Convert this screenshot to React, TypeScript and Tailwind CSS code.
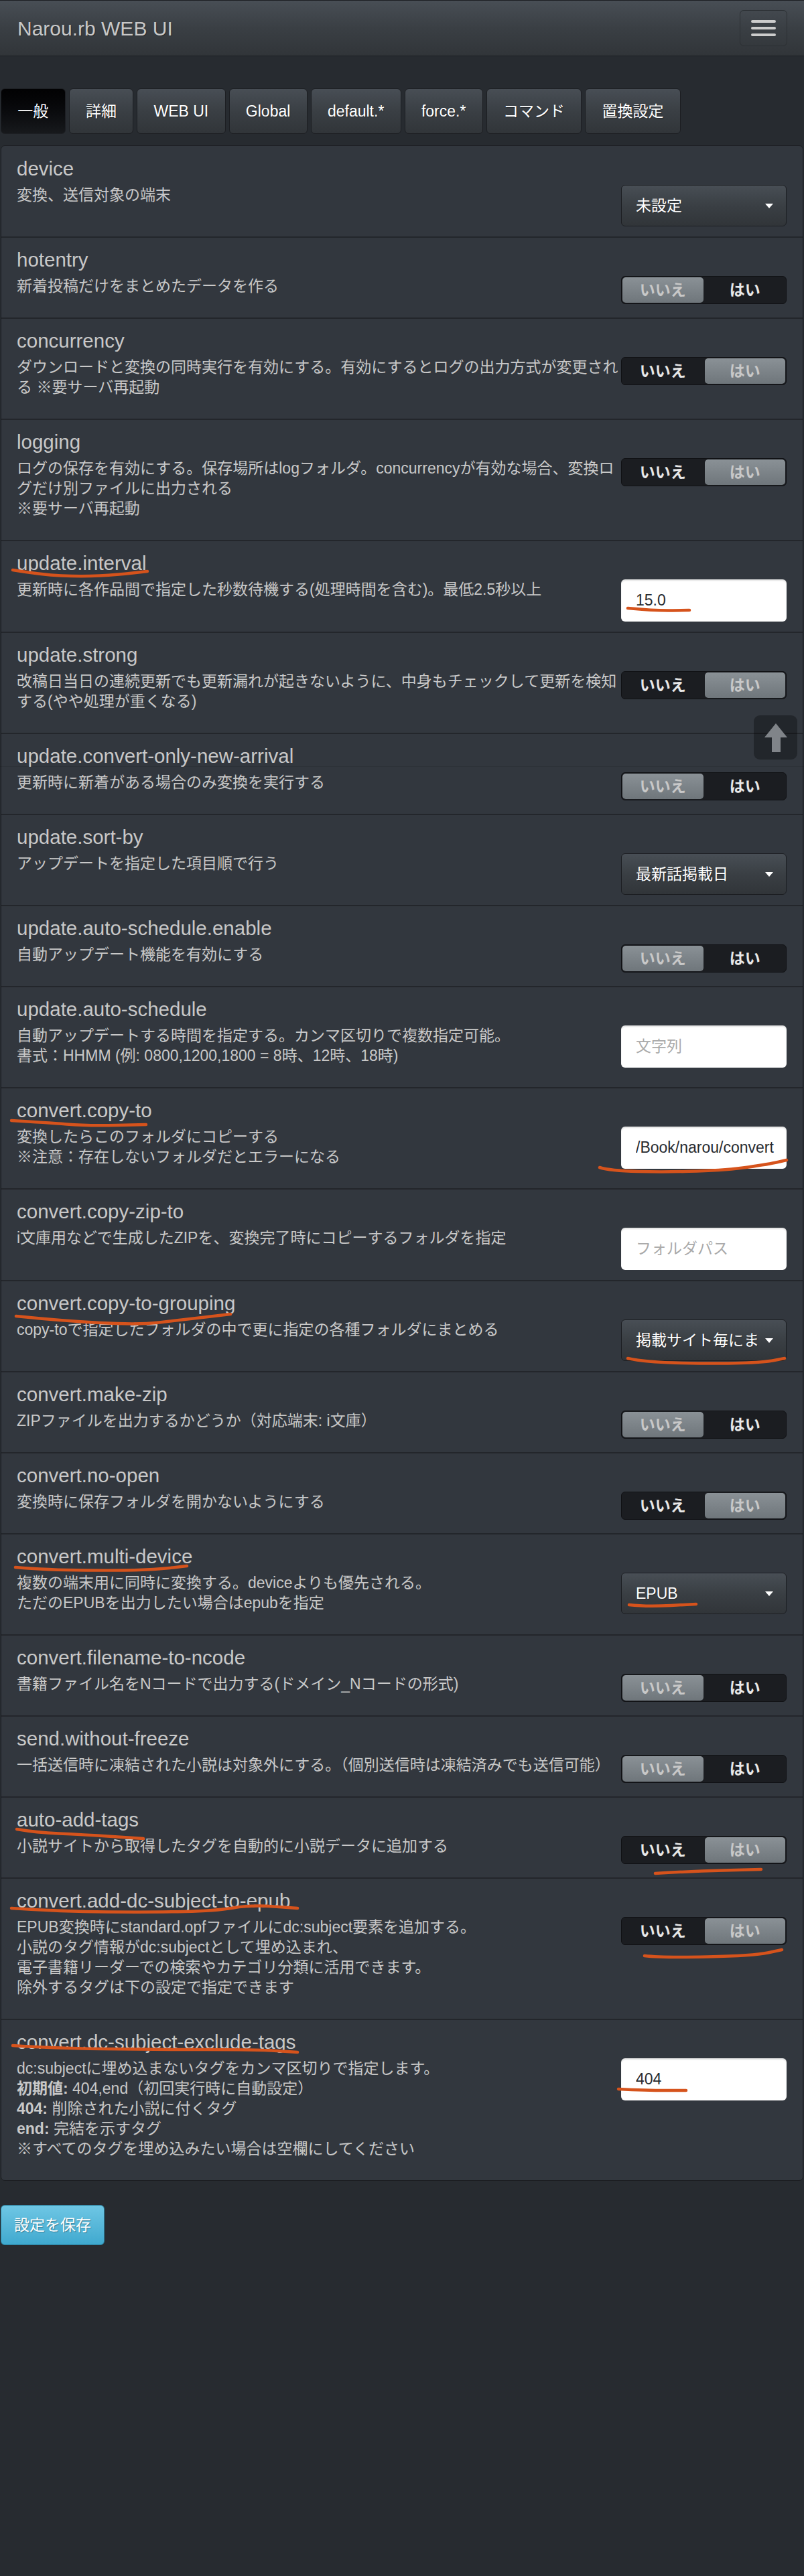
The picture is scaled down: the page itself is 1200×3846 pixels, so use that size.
import type { ReactNode } from "react";

type Control =
  | { kind: "switch"; on: boolean }
  | { kind: "select"; value: string }
  | { kind: "input"; value?: string; placeholder?: string };

interface Setting {
  name: string;
  desc: ReactNode[];
  control: Control;
}

const FONT = "font-['Liberation_Sans','Noto_Sans_CJK_JP',sans-serif]";

const tabs = ["一般", "詳細", "WEB UI", "Global", "default.*", "force.*", "コマンド", "置換設定"];

const settings: Setting[] = [
  { name: "device", desc: ["変換、送信対象の端末"], control: { kind: "select", value: "未設定" } },
  { name: "hotentry", desc: ["新着投稿だけをまとめたデータを作る"], control: { kind: "switch", on: false } },
  {
    name: "concurrency",
    desc: ["ダウンロードと変換の同時実行を有効にする。有効にするとログの出力方式が変更される ※要サーバ再起動"],
    control: { kind: "switch", on: true },
  },
  {
    name: "logging",
    desc: ["ログの保存を有効にする。保存場所はlogフォルダ。concurrencyが有効な場合、変換ログだけ別ファイルに出力される", "※要サーバ再起動"],
    control: { kind: "switch", on: true },
  },
  {
    name: "update.interval",
    desc: ["更新時に各作品間で指定した秒数待機する(処理時間を含む)。最低2.5秒以上"],
    control: { kind: "input", value: "15.0" },
  },
  {
    name: "update.strong",
    desc: ["改稿日当日の連続更新でも更新漏れが起きないように、中身もチェックして更新を検知する(やや処理が重くなる)"],
    control: { kind: "switch", on: true },
  },
  { name: "update.convert-only-new-arrival", desc: ["更新時に新着がある場合のみ変換を実行する"], control: { kind: "switch", on: false } },
  { name: "update.sort-by", desc: ["アップデートを指定した項目順で行う"], control: { kind: "select", value: "最新話掲載日" } },
  { name: "update.auto-schedule.enable", desc: ["自動アップデート機能を有効にする"], control: { kind: "switch", on: false } },
  {
    name: "update.auto-schedule",
    desc: ["自動アップデートする時間を指定する。カンマ区切りで複数指定可能。", "書式：HHMM (例: 0800,1200,1800 = 8時、12時、18時)"],
    control: { kind: "input", placeholder: "文字列" },
  },
  {
    name: "convert.copy-to",
    desc: ["変換したらこのフォルダにコピーする", "※注意：存在しないフォルダだとエラーになる"],
    control: { kind: "input", value: "/Book/narou/convert" },
  },
  {
    name: "convert.copy-zip-to",
    desc: ["i文庫用などで生成したZIPを、変換完了時にコピーするフォルダを指定"],
    control: { kind: "input", placeholder: "フォルダパス" },
  },
  {
    name: "convert.copy-to-grouping",
    desc: ["copy-toで指定したフォルダの中で更に指定の各種フォルダにまとめる"],
    control: { kind: "select", value: "掲載サイト毎にまとめる" },
  },
  { name: "convert.make-zip", desc: ["ZIPファイルを出力するかどうか（対応端末: i文庫）"], control: { kind: "switch", on: false } },
  { name: "convert.no-open", desc: ["変換時に保存フォルダを開かないようにする"], control: { kind: "switch", on: true } },
  {
    name: "convert.multi-device",
    desc: ["複数の端末用に同時に変換する。deviceよりも優先される。", "ただのEPUBを出力したい場合はepubを指定"],
    control: { kind: "select", value: "EPUB" },
  },
  { name: "convert.filename-to-ncode", desc: ["書籍ファイル名をNコードで出力する(ドメイン_Nコードの形式)"], control: { kind: "switch", on: false } },
  { name: "send.without-freeze", desc: ["一括送信時に凍結された小説は対象外にする。（個別送信時は凍結済みでも送信可能）"], control: { kind: "switch", on: false } },
  { name: "auto-add-tags", desc: ["小説サイトから取得したタグを自動的に小説データに追加する"], control: { kind: "switch", on: true } },
  {
    name: "convert.add-dc-subject-to-epub",
    desc: [
      "EPUB変換時にstandard.opfファイルにdc:subject要素を追加する。",
      "小説のタグ情報がdc:subjectとして埋め込まれ、",
      "電子書籍リーダーでの検索やカテゴリ分類に活用できます。",
      "除外するタグは下の設定で指定できます",
    ],
    control: { kind: "switch", on: true },
  },
  {
    name: "convert.dc-subject-exclude-tags",
    desc: [
      "dc:subjectに埋め込まないタグをカンマ区切りで指定します。",
      <><b>初期値:</b> 404,end（初回実行時に自動設定）</>,
      <><b>404:</b> 削除された小説に付くタグ</>,
      <><b>end:</b> 完結を示すタグ</>,
      "※すべてのタグを埋め込みたい場合は空欄にしてください",
    ],
    control: { kind: "input", value: "404" },
  },
];

// hand-drawn marks on the screenshot, in page coordinates
const marks: [number, number][][] = [
  [[19, 851], [61, 858], [122, 861], [176, 858], [220, 853]],
  [[937, 908], [979, 912], [1029, 911]],
  [[17, 1673], [69, 1676], [130, 1681], [218, 1679]],
  [[895, 1743], [910, 1748], [995, 1750], [1086, 1747], [1148, 1738], [1174, 1732]],
  [[24, 1965], [92, 1972], [207, 1978], [268, 1971], [344, 1962]],
  [[937, 2028], [964, 2034], [1071, 2036], [1140, 2034], [1171, 2028]],
  [[23, 2340], [69, 2344], [191, 2345], [245, 2342], [279, 2338]],
  [[939, 2396], [964, 2399], [1039, 2395]],
  [[25, 2731], [54, 2736], [122, 2739], [214, 2745]],
  [[978, 2797], [1025, 2794], [1136, 2791]],
  [[17, 2849], [92, 2854], [230, 2855], [321, 2853], [375, 2844], [444, 2849]],
  [[962, 2920], [987, 2923], [1125, 2920], [1167, 2911]],
  [[19, 3054], [76, 3058], [230, 3060], [383, 3060], [444, 3064]],
  [[923, 3119], [964, 3121], [1024, 3121]],
];

function markPath(points: [number, number][]) {
  let d = `M${points[0][0]} ${points[0][1]}`;
  for (let i = 1; i < points.length - 1; i++) {
    const mx = (points[i][0] + points[i + 1][0]) / 2;
    const my = (points[i][1] + points[i + 1][1]) / 2;
    d += ` Q${points[i][0]} ${points[i][1]} ${mx} ${my}`;
  }
  const last = points[points.length - 1];
  return `${d} L${last[0]} ${last[1]}`;
}

function Switch({ on }: { on: boolean }) {
  const active = "bg-gradient-to-b from-[#8a9196] to-[#6f767b] text-[#c8c8c8] rounded-[5px]";
  const idle = "text-[#e8e8e8]";
  return (
    <div className="flex h-[42px] w-[247px] gap-[2px] rounded-[6px] border border-[#101114] bg-[#1b1d21] p-px text-[23px] font-bold leading-[38px] text-center">
      <div className={`flex-1 ${on ? idle : active}`}>いいえ</div>
      <div className={`flex-1 ${on ? active : idle}`}>はい</div>
    </div>
  );
}

function SelectBox({ value }: { value: string }) {
  return (
    <div className="flex h-[62px] w-[247px] items-center gap-2 rounded-[6px] border border-[#1c1e22] bg-gradient-to-b from-[#484e55] via-[#3a3f44] to-[#313539] pl-[21px] pr-[19px] text-[23px] text-white">
      <span className="flex-1 overflow-hidden whitespace-nowrap [text-shadow:1px_1px_1px_rgba(0,0,0,0.3)]">{value}</span>
      <span className="h-0 w-0 border-x-[6px] border-t-[7px] border-x-transparent border-t-white" />
    </div>
  );
}

function TextBox({ value, placeholder }: { value?: string; placeholder?: string }) {
  return (
    <input
      readOnly
      value={value ?? ""}
      placeholder={placeholder}
      className={`block h-[63px] w-[247px] rounded-[6px] bg-white pl-[22px] pr-[16px] text-[23px] text-[#272b30] shadow-[inset_0_2px_2px_rgba(0,0,0,0.12)] outline-none placeholder:text-[#aaaaaa] ${FONT}`}
    />
  );
}

function SettingRow({ setting, first }: { setting: Setting; first: boolean }) {
  const { control } = setting;
  return (
    <div className={`pl-[23px] pr-[24px] ${first ? "pt-[16px]" : "border-t-2 border-[#23262b] pt-[15px]"}`}>
      <div className="h-[42px] text-[29.5px] leading-[36px] text-[#c8c8c8]">{setting.name}</div>
      <div className="flex items-start gap-[1px]">
        <div className="min-w-0 flex-1 break-all pb-[32px] text-[23px] leading-[30px] text-[#c8c8c8]">
          {setting.desc.map((line, i) => (
            <div key={i}>{line}</div>
          ))}
        </div>
        <div className="shrink-0 pb-[15px]">
          {control.kind === "switch" && <Switch on={control.on} />}
          {control.kind === "select" && <SelectBox value={control.value} />}
          {control.kind === "input" && <TextBox value={control.value} placeholder={control.placeholder} />}
        </div>
      </div>
    </div>
  );
}

export default function App() {
  return (
    <div className={`relative min-h-[3846px] overflow-hidden bg-[#272b30] ${FONT}`}>
      <nav className="flex h-[84px] items-center justify-between border-y border-[#1c1e22] bg-gradient-to-b from-[#484e55] via-[#3a3f44] to-[#313539] pl-[26px] pr-[25px]">
        <span className="text-[30px] text-[#c8c8c8] [text-shadow:1px_1px_1px_rgba(0,0,0,0.3)]">Narou.rb WEB UI</span>
        <div className="flex h-[54px] w-[71px] flex-col items-center justify-center gap-[6px] rounded-[6px] border border-[#2b2f33]">
          <span className="h-[4px] w-[37px] rounded-sm bg-[#cccccc]" />
          <span className="h-[4px] w-[37px] rounded-sm bg-[#cccccc]" />
          <span className="h-[4px] w-[37px] rounded-sm bg-[#cccccc]" />
        </div>
      </nav>

      <div className="px-px pt-[48px]">
        <div className="flex gap-[5px]">
          {tabs.map((tab, i) => (
            <div
              key={tab}
              className={`flex h-[68px] items-center rounded-[6px] border border-[#1c1e22] px-[24.3px] text-[23px] text-white [text-shadow:1px_1px_1px_rgba(0,0,0,0.3)] ${
                i === 0 ? "bg-gradient-to-b from-[#020203] to-[#17191c]" : "bg-gradient-to-b from-[#484e55] via-[#3a3f44] to-[#313539]"
              }`}
            >
              {tab}
            </div>
          ))}
        </div>

        <div className="mt-[17px] rounded-[6px] border border-[#1c1e22] bg-[#32373e]">
          {settings.map((setting, i) => (
            <SettingRow key={setting.name} setting={setting} first={i === 0} />
          ))}
        </div>

        <button className="mt-[36px] block h-[60px] w-[155px] rounded-[6px] border border-[#2a7f9c] bg-gradient-to-b from-[#6ec6e4] to-[#3fa9cf] text-[23px] text-white [text-shadow:1px_1px_1px_rgba(0,0,0,0.3)]">
          設定を保存
        </button>
      </div>

      {/* faint seam across the capture */}
      <div className="absolute left-0 top-[1144px] h-px w-full bg-black/10" />

      {/* back to top button */}
      <div className="absolute left-[1125px] top-[1068px] flex h-[66px] w-[65px] items-center justify-center rounded-[9px] bg-black/30">
        <svg width="34" height="43" viewBox="0 0 34 43">
          <path d="M17 0 L34 21 L24 21 L24 43 L11 43 L11 21 L0 21 Z" fill="#808489" />
        </svg>
      </div>

      <svg className="pointer-events-none absolute left-0 top-0" width="1200" height="3846" viewBox="0 0 1200 3846" fill="none">
        {marks.map((points, i) => (
          <path key={i} d={markPath(points)} stroke="#d6531c" strokeWidth="4.5" strokeLinecap="round" strokeLinejoin="round" />
        ))}
      </svg>
    </div>
  );
}
